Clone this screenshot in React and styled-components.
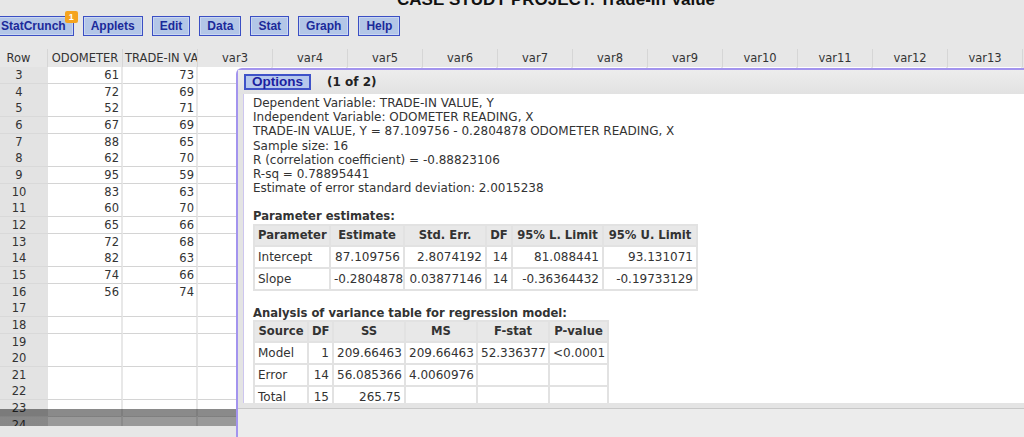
import styled, { createGlobalStyle } from "styled-components";

const GlobalStyle = createGlobalStyle`
  html, body {
    margin: 0;
    padding: 0;
  }
  body {
    background: #e7e7e7;
    font-family: "DejaVu Sans", Verdana, sans-serif;
    overflow: hidden;
  }
`;

const Page = styled.div`
  position: relative;
  width: 1024px;
  height: 437px;
  overflow: hidden;
  display: flex;
  flex-direction: column;
`;

const TitleBar = styled.div`
  height: 10px;
  display: flex;
  align-items: flex-end;
  padding-left: 397px;
  overflow: hidden;
`;

const Title = styled.div`
  font: bold 17px/20px "Liberation Sans", Arial, sans-serif;
  color: #111;
  white-space: nowrap;
`;

const MenuBar = styled.div`
  display: flex;
  gap: 9px;
  margin: 6px 0 0 -7px;
  height: 20px;
`;

const MenuButton = styled.div`
  position: relative;
  height: 20px;
  box-sizing: border-box;
  padding: 0 7px;
  border: 1px solid #3b4fc4;
  box-shadow: inset 0 0 0 1px #cad7f1;
  background: #b3c6e7;
  color: #1b2a9a;
  font: bold 12px/18px "Liberation Sans", Arial, sans-serif;
  white-space: nowrap;
`;

const Badge = styled.span`
  position: absolute;
  top: -6px;
  right: -5px;
  width: 13px;
  height: 12px;
  border-radius: 2px;
  background: #f5a41f;
  color: #fff;
  font: bold 9px/12px "Liberation Sans", Arial, sans-serif;
  text-align: center;
`;

const Sheet = styled.div`
  position: relative;
  margin-top: 13px;
  height: 377px;
  overflow: hidden;
  font: 11.5px "DejaVu Sans", Verdana, sans-serif;
  color: #333;
`;

const SheetRow = styled.div`
  display: grid;
  grid-template-columns: 48px repeat(13, 75px);
  height: ${(p) => (p.$head ? "18px" : "16.67px")};
`;

const HeadCell = styled.div`
  box-sizing: border-box;
  border-right: 1px solid #d6d6d6;
  line-height: 18px;
  text-align: center;
  padding: ${(p) => (p.$row ? "0 10px 0 0" : "0 2px")};
  white-space: nowrap;
  overflow: hidden;
`;

const RowNum = styled.div`
  box-sizing: border-box;
  background: #e3e3e3;
  border-bottom: 1px solid #d9d9d9;
  text-align: center;
  padding-right: 10px;
  line-height: 16px;
`;

const Cell = styled.div`
  box-sizing: border-box;
  background: #fff;
  border-bottom: 1px solid #d4d4d4;
  border-right: 2px solid #e8e8e8;
  text-align: right;
  padding-right: 2px;
  line-height: 16px;
`;

const ScrollShade = styled.div`
  position: absolute;
  left: 0;
  right: 0;
  bottom: 0;
  height: 17px;
  background: linear-gradient(
    rgba(0, 0, 0, 0.46) 0 7px,
    rgba(0, 0, 0, 0.4) 7px 100%
  );
`;

const Window = styled.div`
  position: absolute;
  left: 236px;
  top: 68px;
  right: 0;
  bottom: 0;
  display: flex;
  flex-direction: column;
  background: #e4e4e4;
  border-left: 2px solid #a394ee;
  border-top: 2px solid #a394ee;
  border-top-left-radius: 6px;
`;

const WinToolbar = styled.div`
  height: 24px;
  flex: none;
  display: flex;
  align-items: center;
  gap: 16px;
  padding-left: 6px;
  background: linear-gradient(#ededed, #e2e2e2);
`;

const OptionsButton = styled.div`
  height: 16px;
  box-sizing: border-box;
  padding: 0 6px;
  border: 2px solid #3f52c8;
  background: #b6c8ec;
  color: #1a1fa0;
  font: bold 13.5px/12px "Liberation Sans", Arial, sans-serif;
`;

const PageCount = styled.span`
  font: bold 12px "DejaVu Sans", Verdana, sans-serif;
  color: #222;
`;

const Content = styled.div`
  flex: none;
  height: 309px;
  margin-left: 5px;
  box-sizing: border-box;
  border-left: 1px solid #cdc6ef;
  background: #fff;
  overflow: hidden;
  padding: 2px 0 0 9px;
  font: 12px/14.2px "DejaVu Sans", Verdana, sans-serif;
  color: #333;
`;

const Line = styled.div`
  white-space: nowrap;
`;

const Heading = styled.div`
  margin-top: ${(p) => p.$gap}px;
  font-weight: bold;
  font-size: 11.6px;
  white-space: nowrap;
`;

const StatTable = styled.table`
  border-collapse: collapse;
  table-layout: fixed;
  border: 2px solid #e2e2e2;
  font-size: 12px;
  color: #333;

  th,
  td {
    border: 2px solid #e2e2e2;
    padding: 0 3px;
    white-space: nowrap;
    overflow: hidden;
  }
  tr {
    height: 22px;
  }
  thead tr {
    height: 21px;
  }
  th {
    background: #e8e8e8;
    font-weight: bold;
    font-size: 11.6px;
    text-align: center;
  }
  td {
    text-align: right;
  }
  td:first-child {
    text-align: left;
  }
`;

const StatusBar = styled.div`
  flex: 1;
  margin-top: 5px;
  border-top: 1px solid #c8c8c8;
  background: #ececec;
`;

const menus = ["StatCrunch", "Applets", "Edit", "Data", "Stat", "Graph", "Help"];

const columns = [
  "ODOMETER",
  "TRADE-IN VALUE",
  "var3",
  "var4",
  "var5",
  "var6",
  "var7",
  "var8",
  "var9",
  "var10",
  "var11",
  "var12",
  "var13",
];

const odometer = [61, 72, 52, 67, 88, 62, 95, 83, 60, 65, 72, 82, 74, 56];
const tradeIn = [73, 69, 71, 69, 65, 70, 59, 63, 70, 66, 68, 63, 66, 74];

const rows = Array.from({ length: 22 }, (_, i) => ({
  n: i + 3,
  a: odometer[i],
  b: tradeIn[i],
}));

const summary = [
  "Dependent Variable: TRADE-IN VALUE, Y",
  "Independent Variable: ODOMETER READING, X",
  "TRADE-IN VALUE, Y = 87.109756 - 0.2804878 ODOMETER READING, X",
  "Sample size: 16",
  "R (correlation coefficient) = -0.88823106",
  "R-sq = 0.78895441",
  "Estimate of error standard deviation: 2.0015238",
];

const paramCols = [76, 74, 82, 26, 91, 94];
const paramHead = ["Parameter", "Estimate", "Std. Err.", "DF", "95% L. Limit", "95% U. Limit"];
const paramRows = [
  ["Intercept", "87.109756", "2.8074192", "14", "81.088441", "93.131071"],
  ["Slope", "-0.2804878", "0.03877146", "14", "-0.36364432", "-0.19733129"],
];

const anovaCols = [54, 25, 72, 72, 72, 59];
const anovaHead = ["Source", "DF", "SS", "MS", "F-stat", "P-value"];
const anovaRows = [
  ["Model", "1", "209.66463", "209.66463", "52.336377", "<0.0001"],
  ["Error", "14", "56.085366", "4.0060976", "", ""],
  ["Total", "15", "265.75", "", "", ""],
];

const ResultTable = ({ widths, head, body }) => (
  <StatTable style={{ width: widths.reduce((s, w) => s + w, 0) }}>
    <colgroup>
      {widths.map((w, i) => (
        <col key={i} width={w} />
      ))}
    </colgroup>
    <thead>
      <tr>
        {head.map((h) => (
          <th key={h}>{h}</th>
        ))}
      </tr>
    </thead>
    <tbody>
      {body.map((r, i) => (
        <tr key={i}>
          {r.map((c, j) => (
            <td key={j}>{c}</td>
          ))}
        </tr>
      ))}
    </tbody>
  </StatTable>
);

const App = () => {
  return (
    <Page>
      <GlobalStyle />
      <TitleBar>
        <Title>CASE STUDY PROJECT: Trade-In Value</Title>
      </TitleBar>

      <MenuBar>
        {menus.map((m, i) => (
          <MenuButton key={m}>
            {m}
            {i === 0 && <Badge>1</Badge>}
          </MenuButton>
        ))}
      </MenuBar>

      <Sheet>
        <SheetRow $head>
          <HeadCell $row>Row</HeadCell>
          {columns.map((c) => (
            <HeadCell key={c}>{c}</HeadCell>
          ))}
        </SheetRow>
        {rows.map((r) => (
          <SheetRow key={r.n}>
            <RowNum>{r.n}</RowNum>
            <Cell>{r.a}</Cell>
            <Cell>{r.b}</Cell>
            {columns.slice(2).map((c) => (
              <Cell key={c} />
            ))}
          </SheetRow>
        ))}
        <ScrollShade />
      </Sheet>

      <Window>
        <WinToolbar>
          <OptionsButton>Options</OptionsButton>
          <PageCount>(1 of 2)</PageCount>
        </WinToolbar>
        <Content>
          {summary.map((s) => (
            <Line key={s}>{s}</Line>
          ))}
          <Heading $gap={14}>Parameter estimates:</Heading>
          <ResultTable widths={paramCols} head={paramHead} body={paramRows} />
          <Heading $gap={15}>Analysis of variance table for regression model:</Heading>
          <ResultTable widths={anovaCols} head={anovaHead} body={anovaRows} />
        </Content>
        <StatusBar />
      </Window>
    </Page>
  );
};

export default App;
